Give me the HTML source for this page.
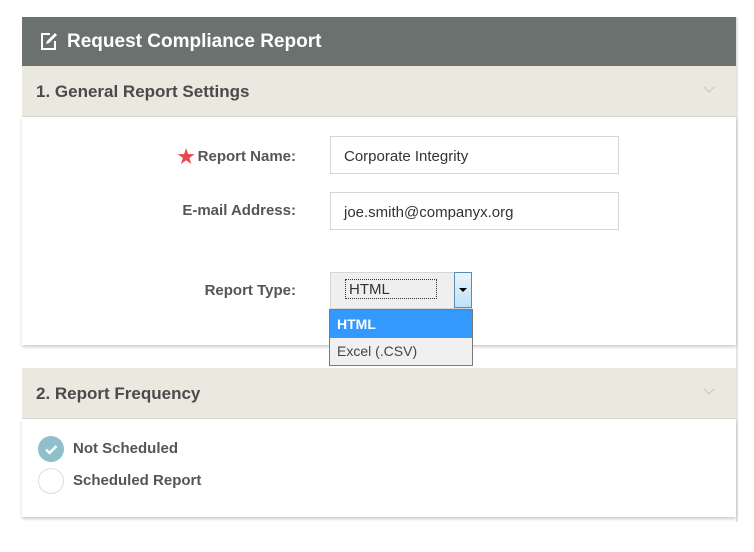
<!DOCTYPE html>
<html><head><meta charset="utf-8"><style>
body{margin:0;width:754px;height:552px;background:#fff;font-family:"Liberation Sans",sans-serif;position:relative;overflow:hidden}
.a{position:absolute}
.b{font-weight:bold;color:#555}
.hdr{left:22px;top:17px;width:714px;height:49px;background:#6b716f;color:#fff;font-weight:bold;font-size:19px}
.sec{left:22px;width:714px;height:50px;background:#ebe8e0;border-bottom:1px solid #dcd9d2;font-weight:bold;font-size:17px;color:#4a4a4a}
.body{left:22px;width:714px;background:#fff;box-shadow:0 2px 3px rgba(0,0,0,.2)}
.rline{left:736px;top:17px;width:2px;height:505px;background:#e4e4e4}
.inp{border:1px solid #d6d6d6;background:#fff;font-size:15px;color:#333;box-sizing:border-box;padding-left:13px;line-height:40px}
.lbl{font-size:15px;font-weight:bold;color:#555;text-align:right;width:296px;left:0}
.chev{width:7px;height:7px;border-right:1.5px solid #c8c5be;border-bottom:1.5px solid #c8c5be;transform:rotate(45deg)}
</style></head><body>
<div class="a rline"></div>
<div class="a hdr"><svg class="a" style="left:17px;top:15px" width="19" height="19" viewBox="0 0 19 19"><path d="M11 2H3v15h13V9" fill="none" stroke="#fff" stroke-width="2"/><path d="M16 1l2 2-8 8-3 1 1-3z" fill="#fff"/></svg><span class="a" style="left:45px;top:14px">Request Compliance Report</span></div>
<div class="a sec" style="top:66px"><span class="a" style="left:14px;top:16px">1. General Report Settings</span><div class="a chev" style="left:683px;top:17px"></div></div>
<div class="a body" style="top:117px;height:228px"></div>
<div class="a lbl" style="top:146px"><span style="color:#e8474c;font-size:19px;vertical-align:-2px;margin-right:3px">★</span>Report Name:</div>
<div class="a inp" style="left:330px;top:136px;width:289px;height:38px">Corporate Integrity</div>
<div class="a lbl" style="top:202px">E-mail Address:</div>
<div class="a inp" style="left:330px;top:192px;width:289px;height:38px">joe.smith@companyx.org</div>
<div class="a lbl" style="top:282px">Report Type:</div>
<div class="a" style="left:330px;top:272px;width:142px;height:37px;background:#efefef;border:1px solid #d6d6d6;box-sizing:border-box"></div>
<div class="a" style="left:345px;top:279px;width:92px;height:20px;border:1px dotted #333;font-size:15px;color:#333;line-height:20px;padding-left:3px;box-sizing:border-box">HTML</div>
<div class="a" style="left:454px;top:272px;width:18px;height:36px;background:linear-gradient(#eaf5fd,#bfe0f6);border:1px solid #5a8bb0;box-sizing:border-box"></div>
<div class="a" style="left:459px;top:288px;width:0;height:0;border-left:4px solid transparent;border-right:4px solid transparent;border-top:4px solid #000"></div>
<div class="a" style="left:329px;top:309px;width:144px;height:57px;border:1px solid #7a7a7a;box-sizing:border-box;background:#f0f0f0">
<div style="height:28px;background:#3399ff;color:#fff;font-weight:bold;font-size:14px;line-height:28px;padding-left:7px">HTML</div>
<div style="height:27px;color:#444;font-size:14px;line-height:27px;padding-left:7px">Excel (.CSV)</div></div>
<div class="a sec" style="top:368px"><span class="a" style="left:14px;top:16px">2. Report Frequency</span><div class="a chev" style="left:683px;top:17px"></div></div>
<div class="a body" style="top:419px;height:98px"></div>
<div class="a" style="left:38px;top:436px;width:26px;height:26px;border-radius:50%;background:#8ebfcb"><svg width="26" height="26"><path d="M8 13.5l3.5 3.5 7-7" fill="none" stroke="#fff" stroke-width="2.5"/></svg></div>
<div class="a b" style="left:73px;top:440px;font-size:15px">Not Scheduled</div>
<div class="a" style="left:38px;top:468px;width:24px;height:24px;border-radius:50%;border:1px solid #ddd"></div>
<div class="a b" style="left:73px;top:472px;font-size:15px">Scheduled Report</div>
</body></html>
